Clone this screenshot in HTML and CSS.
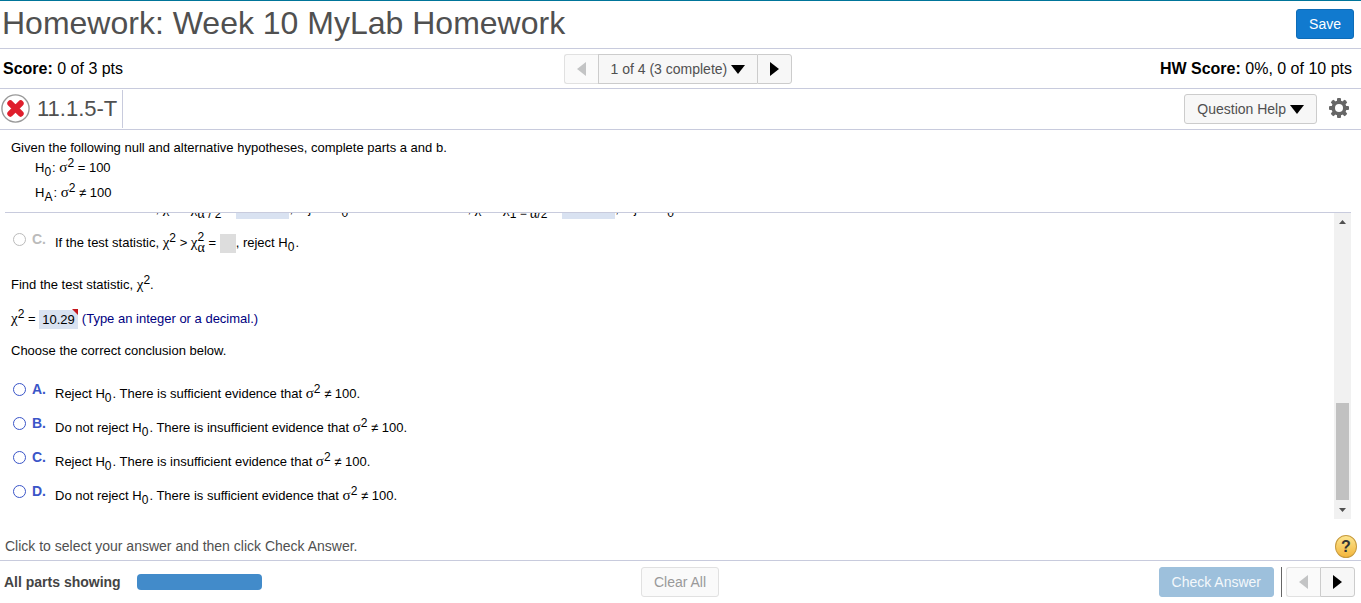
FILE: index.html
```html
<!DOCTYPE html>
<html lang="en">

<head>
    <meta charset="UTF-8">
    <meta name="viewport" content="width=device-width, initial-scale=1.0">
    <title>Homework: Week 10 MyLab Homework</title>
    <link rel="stylesheet" href="styles.css">
</head>

<body>
    <header class="title-bar">
        <h1>Homework: Week 10 MyLab Homework</h1>
        <button type="button" class="btn btn-save">Save</button>
    </header>

    <div class="score-bar">
        <div><b>Score:</b> 0 of 3 pts</div>
        <nav class="btn-group">
            <button type="button" class="btn btn-arrow" aria-label="Previous question" disabled>
                <svg width="9" height="14" viewBox="0 0 9 14"><path d="M9 0v14L0 7z" fill="currentColor"/></svg>
            </button>
            <div class="question-select">
                <select class="btn" aria-label="Question">
                    <option>1 of 4 (3 complete)</option>
                </select>
                <svg class="caret" width="14" height="9" viewBox="0 0 14 9"><path d="M0 0h14L7 9z"/></svg>
            </div>
            <button type="button" class="btn btn-arrow" aria-label="Next question">
                <svg width="9" height="14" viewBox="0 0 9 14"><path d="M0 0v14l9-7z" fill="currentColor"/></svg>
            </button>
        </nav>
        <div class="hw-score"><b>HW Score:</b> 0%, 0 of 10 pts</div>
    </div>

    <div class="question-bar">
        <div class="question-name">
            <svg width="30" height="30" viewBox="0 0 30 30">
                <circle cx="14.5" cy="14.5" r="13.6" fill="#fff" stroke="#999" stroke-width="1.4"/>
                <path d="M9.3 9.3l10.4 10.4M19.7 9.3L9.3 19.7" stroke="#df1f2d" stroke-width="6" stroke-linecap="round"/>
            </svg>
            <h2>11.1.5-T</h2>
        </div>
        <div class="question-tools">
            <button type="button" class="btn btn-help">Question Help
                <svg width="14" height="9" viewBox="0 0 14 9"><path d="M0 0h14L7 9z" fill="#000"/></svg>
            </button>
            <button type="button" class="icon-btn" aria-label="Settings">
                <svg width="20" height="20" viewBox="0 0 20 20">
                    <g fill="#666">
                        <rect x="8" y="0" width="4" height="20" rx="1"/>
                        <rect x="8" y="0" width="4" height="20" rx="1" transform="rotate(45 10 10)"/>
                        <rect x="8" y="0" width="4" height="20" rx="1" transform="rotate(90 10 10)"/>
                        <rect x="8" y="0" width="4" height="20" rx="1" transform="rotate(135 10 10)"/>
                        <circle cx="10" cy="10" r="7.6"/>
                    </g>
                    <circle cx="10" cy="10" r="4" fill="#fff"/>
                </svg>
            </button>
        </div>
    </div>

    <main>
        <section class="given">
            <p>Given the following null and alternative hypotheses, complete parts a and b.</p>
            <p class="hypothesis">H<sub>0</sub>: <i>σ</i><sup>2</sup> = 100</p>
            <p class="hypothesis">H<sub>A</sub>: <i>σ</i><sup>2</sup> ≠ 100</p>
        </section>

        <section class="work">
            <div class="work-content">
                <div class="choice disabled">
                    <input type="radio" name="rule" id="rule-b" disabled>
                    <label for="rule-b"><b>B.</b></label>
                    <div class="choice-text">
                        If the test statistic, <i>χ</i><sup>2</sup> &gt; <i>χ</i><span class="stack"><span>2</span><span><i>α</i> / 2</span></span> =
                        <input class="blank blank-wide" aria-label="Upper critical value" readonly>, reject H<sub>0</sub>
                        or if the test statistic, <i>χ</i><sup>2</sup> &lt; <i>χ</i><span class="stack"><span>2</span><span>1 − <i>α</i>/2</span></span> =
                        <input class="blank blank-wide" aria-label="Lower critical value" readonly>, reject H<sub>0</sub>.
                    </div>
                </div>
                <div class="choice disabled">
                    <input type="radio" name="rule" id="rule-c" disabled>
                    <label for="rule-c"><b>C.</b></label>
                    <div class="choice-text">
                        If the test statistic, <i>χ</i><sup>2</sup> &gt; <i>χ</i><span class="stack"><span>2</span><span><i>α</i></span></span> =
                        <input class="blank blank-empty" aria-label="Critical value" disabled>, reject H<sub>0</sub>.
                    </div>
                </div>

                <p class="find">Find the test statistic, <i>χ</i><sup>2</sup>.</p>
                <p class="answer">
                    <label for="statistic"><i>χ</i><sup>2</sup> =</label>
                    <span class="marked"><input class="blank blank-answer" id="statistic" value="10.29" readonly></span>
                    <span class="note">(Type an integer or a decimal.)</span>
                </p>
                <p class="conclusion">Choose the correct conclusion below.</p>

                <div class="choice">
                    <input type="radio" name="conclusion" id="con-a">
                    <label for="con-a"><b>A.</b></label>
                    <label for="con-a" class="choice-text">Reject H<sub>0</sub>. There is sufficient evidence that <i>σ</i><sup>2</sup> ≠ 100.</label>
                </div>
                <div class="choice">
                    <input type="radio" name="conclusion" id="con-b">
                    <label for="con-b"><b>B.</b></label>
                    <label for="con-b" class="choice-text">Do not reject H<sub>0</sub>. There is insufficient evidence that <i>σ</i><sup>2</sup> ≠ 100.</label>
                </div>
                <div class="choice">
                    <input type="radio" name="conclusion" id="con-c">
                    <label for="con-c"><b>C.</b></label>
                    <label for="con-c" class="choice-text">Reject H<sub>0</sub>. There is insufficient evidence that <i>σ</i><sup>2</sup> ≠ 100.</label>
                </div>
                <div class="choice">
                    <input type="radio" name="conclusion" id="con-d">
                    <label for="con-d"><b>D.</b></label>
                    <label for="con-d" class="choice-text">Do not reject H<sub>0</sub>. There is sufficient evidence that <i>σ</i><sup>2</sup> ≠ 100.</label>
                </div>
            </div>
            <div class="scrollbar">
                <svg width="7" height="4" viewBox="0 0 7 4"><path d="M0 4h7L3.5 0z" fill="#505050"/></svg>
                <div class="thumb"></div>
                <svg width="7" height="4" viewBox="0 0 7 4"><path d="M0 0h7L3.5 4z" fill="#505050"/></svg>
            </div>
        </section>
    </main>

    <div class="hint">
        <p>Click to select your answer and then click Check Answer.</p>
        <button type="button" class="help-badge" aria-label="Help">?</button>
    </div>

    <footer>
        <div class="parts">
            <b>All parts showing</b>
            <div class="progress"></div>
        </div>
        <button type="button" class="btn btn-clear" disabled>Clear All</button>
        <div class="footer-right">
            <button type="button" class="btn btn-check" disabled>Check Answer</button>
            <div class="footer-nav">
                <div class="btn-group">
                    <button type="button" class="btn btn-arrow" aria-label="Previous" disabled>
                        <svg width="9" height="14" viewBox="0 0 9 14"><path d="M9 0v14L0 7z" fill="currentColor"/></svg>
                    </button>
                    <button type="button" class="btn btn-arrow" aria-label="Next">
                        <svg width="9" height="14" viewBox="0 0 9 14"><path d="M0 0v14l9-7z" fill="currentColor"/></svg>
                    </button>
                </div>
            </div>
        </div>
    </footer>
</body>

</html>
```
FILE: styles.css
```css
* {
    box-sizing: border-box;
}

body {
    display: flex;
    flex-direction: column;
    height: 100vh;
    margin: 0;
    border-top: 1px solid #00759a;
    font-family: "Liberation Sans", Arial, sans-serif;
    font-size: 16px;
    color: #000;
    background-color: #fff;
}

h1,
h2,
p {
    margin: 0;
    font-weight: normal;
}

svg {
    display: block;
}

/* buttons */
.btn {
    height: 30px;
    padding: 0 12px;
    border: 1px solid #ccc;
    border-radius: 3px;
    background-color: #f7f7f7;
    color: #505050;
    font-family: inherit;
    font-size: 14px;
}

.btn-save {
    border-color: #0d6cb8;
    background-color: #117acf;
    color: #fff;
}

.btn-arrow {
    display: flex;
    justify-content: center;
    align-items: center;
    width: 35px;
    padding: 0;
    color: #000;
}

.btn-arrow:disabled {
    border-color: #e1e1e1;
    background-color: #fafafa;
    color: #c3c4c5;
}

.btn-help {
    display: flex;
    align-items: center;
    gap: 4px;
}

.btn-clear:disabled {
    border-color: #e1e1e1;
    background-color: #fafafa;
    color: #999;
}

.btn-check:disabled {
    border-color: #9dc0dc;
    background-color: #9dc0dc;
    color: #f4f8fb;
}

.btn-group {
    display: flex;
}

.btn-group > :first-child {
    width: 34px;
    border-right: 0;
    border-radius: 3px 0 0 3px;
}

.btn-group > :last-child {
    border-radius: 0 3px 3px 0;
}

.icon-btn {
    padding: 0 0 2px;
    border: 0;
    background: none;
}

/* top bars */
.title-bar,
.score-bar,
.question-bar {
    border-bottom: 1px solid #c8cbdd;
}

.title-bar {
    display: flex;
    justify-content: space-between;
    align-items: center;
    height: 48px;
    padding: 0 7px 2px 2px;
}

.title-bar h1 {
    font-size: 32px;
    color: #505050;
}

.score-bar {
    display: grid;
    grid-template-columns: 1fr auto 1fr;
    align-items: center;
    height: 40px;
    padding: 0 9px 0 3px;
}

.hw-score {
    text-align: right;
}

.question-select {
    position: relative;
}

.question-select select {
    appearance: none;
    padding-right: 29px;
    border-right: 0;
    border-radius: 0;
}

.caret {
    position: absolute;
    top: 11px;
    right: 12px;
    pointer-events: none;
}

.question-bar {
    display: flex;
    justify-content: space-between;
    align-items: center;
    height: 41px;
    padding-right: 12px;
}

.question-name {
    display: flex;
    align-items: center;
    gap: 6px;
    height: 38px;
    padding: 0 5px 0 1px;
    border-right: 1px solid #c8cbdd;
}

.question-name h2 {
    font-size: 22px;
    color: #505050;
}

.question-tools {
    display: flex;
    align-items: center;
    gap: 12px;
}

/* question content */
main {
    flex: 1;
    display: flex;
    flex-direction: column;
    min-height: 0;
    margin: 0 10px 0 5px;
    font-size: 13px;
    line-height: 16px;
}

main i {
    font-family: "Liberation Serif", "Times New Roman", serif;
    font-size: 15px;
    font-style: normal;
    line-height: 1px;
}

sup,
sub {
    font-size: 12px;
    line-height: 1px;
}

sup {
    vertical-align: 5px;
}

sub {
    margin-right: 1px;
    vertical-align: -4px;
}

/* superscript above subscript */
.stack {
    display: inline-block;
    margin: -8px 0;
    font-size: 12px;
    line-height: 11px;
    vertical-align: -5px;
}

.stack span {
    display: block;
}

.stack i {
    font-size: 14px;
}

.given {
    padding: 10px 6px 11px;
    border-bottom: 1px solid #c8cbdd;
}

.hypothesis {
    padding: 4px 24px 5px;
}

.hypothesis + .hypothesis {
    padding-bottom: 0;
}

.work {
    flex: 1;
    display: flex;
    min-height: 0;
}

.work-content {
    flex: 1;
    display: flex;
    flex-direction: column;
    justify-content: flex-end;
    padding: 0 6px 7px;
    overflow: hidden;
}

.choice {
    display: flex;
    flex-shrink: 0;
    gap: 6px;
    height: 34px;
    padding: 5px 0 0 2px;
    color: #3a55c8;
}

.choice input[type="radio"] {
    appearance: none;
    width: 13px;
    height: 13px;
    margin: 2px 0 0;
    border: 1px solid #3a55c8;
    border-radius: 50%;
}

.choice b {
    display: block;
    width: 17px;
    font-size: 14px;
}

.choice-text {
    padding-top: 5px;
    color: #000;
    white-space: nowrap;
}

.choice.disabled {
    color: #bbb;
}

.choice.disabled .choice-text {
    padding-top: 4px;
}

.choice.disabled input[type="radio"] {
    border-color: #bbb;
}

.blank {
    height: 19px;
    margin: -2px 0;
    padding: 0 3px;
    border: 0;
    background-color: #d9e2f1;
    font-family: inherit;
    font-size: 13px;
    vertical-align: middle;
}

.blank-wide {
    width: 53px;
}

.blank-empty {
    width: 16px;
    background-color: #ddd;
}

.blank-answer {
    width: 39px;
}

.find {
    margin-top: 17px;
}

.answer {
    margin-top: 18px;
}

.marked {
    position: relative;
}

.marked::after {
    content: "";
    position: absolute;
    top: -2px;
    right: 0;
    border-top: 6px solid #c4161c;
    border-left: 6px solid transparent;
}

.note {
    color: #00007f;
}

.conclusion {
    margin: 16px 0 17px;
}

.scrollbar {
    display: flex;
    flex-direction: column;
    align-items: center;
    width: 17px;
    padding: 7px 0;
    background-color: #f1f1f1;
}

.thumb {
    width: 13px;
    height: 97px;
    margin: auto 0 8px;
    background-color: #c1c1c1;
}

/* bottom bars */
.hint {
    display: flex;
    justify-content: space-between;
    align-items: flex-end;
    height: 42px;
    padding: 0 4px 2px 5px;
    border-bottom: 1px solid #c8cbdd;
    font-size: 14px;
    color: #505050;
}

.hint p {
    padding-bottom: 4px;
}

.help-badge {
    width: 22px;
    height: 23px;
    padding: 0;
    border: 1px solid #c79a3c;
    border-radius: 50%;
    background: linear-gradient(#fde58f, #f3b63c);
    color: #333;
    font-family: inherit;
    font-size: 16px;
    font-weight: bold;
}

footer {
    display: grid;
    grid-template-columns: 1fr auto 1fr;
    align-items: center;
    height: 42px;
    padding: 0 5px 0 4px;
    font-size: 14px;
    color: #444;
}

.parts {
    display: flex;
    align-items: center;
    gap: 16px;
}

.progress {
    width: 125px;
    height: 16px;
    border-radius: 4px;
    background-color: #428bca;
}

.footer-right {
    display: flex;
    justify-content: flex-end;
    gap: 7px;
}

.footer-nav {
    padding: 0 1px 0 4px;
    border-left: 1px solid #666;
}
```
